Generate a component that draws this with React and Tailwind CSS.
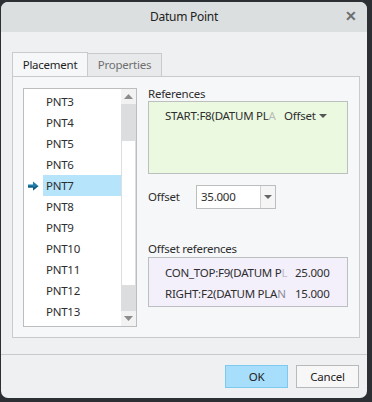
import React from "react";

const points = ["PNT3", "PNT4", "PNT5", "PNT6", "PNT7", "PNT8", "PNT9", "PNT10", "PNT11", "PNT12", "PNT13"];

const ArrowIcon = () => (
  <svg width="11" height="10" viewBox="0 0 11 10">
    <path d="M0 3.5h5V0.5l5.5 4.5L5 9.5V6.5H0z" fill="#1f7fae" />
    <path d="M0 5h5v1.5H0zM5 6.5v3l5.5-4.5H9z" fill="#15587d" />
  </svg>
);

const App = () => {
  return (
    <div
      className="w-[372px] h-[402px] bg-[#2c2f33] pt-[2px] pl-[1px] overflow-hidden text-[#2e2e2e] tracking-[-0.25px]"
      style={{ fontFamily: '"Noto Sans", "Open Sans", sans-serif' }}
    >
      <div className="w-[366px] h-[396px] rounded-[7px] bg-[#eff0f1] overflow-hidden flex flex-col">
        {/* Title bar */}
        <div className="relative h-[30px] bg-[#dcdfe0] flex items-center justify-center shrink-0">
          <span className="text-[12px] text-[#222]">Datum Point</span>
          <span className="absolute right-[10px] top-[7px] text-[14px] font-bold leading-none text-[#6b6e71]">✕</span>
        </div>

        {/* Tabs */}
        <div className="pl-[11px] pt-[20px] flex text-[11.5px]">
          <div className="h-[24px] w-[76px] border border-b-0 border-[#c9cacb] bg-[#f6f7f8] flex items-center justify-center text-[#1e1e1e] relative z-10 -mb-px">
            Placement
          </div>
          <div className="h-[23px] w-[74px] mt-[1px] border border-l-0 border-b-0 border-[#c9cacb] bg-[#e8e9ea] flex items-center justify-center text-[#6d6f71]">
            Properties
          </div>
        </div>

        {/* Tab panel */}
        <div className="ml-[11px] w-[348px] h-[262px] border border-[#c9cacb] bg-[#f6f7f8] flex pl-[10px] pt-[11px] text-[11.5px]">
          {/* List */}
          <div className="w-[114px] h-[239px] border border-[#bcbdbe] bg-white flex">
            <div className="flex-1 pt-[2px]">
              {points.map((p) => (
                <div key={p} className="h-[21px] flex items-center">
                  <div className="w-[19px] flex justify-end pr-[4px]">{p === "PNT7" && <ArrowIcon />}</div>
                  <div
                    className={`flex-1 h-full flex items-center pl-[3px] ${
                      p === "PNT7" ? "bg-[#b5e4fb]" : ""
                    }`}
                  >
                    {p}
                  </div>
                </div>
              ))}
            </div>
            {/* Scrollbar */}
            <div className="w-[15px] flex flex-col bg-[#dcdddf]">
              <div className="h-[15px] bg-[#f2f2f2] flex items-center justify-center">
                <svg width="9" height="5" viewBox="0 0 9 5">
                  <path d="M0 5L4.5 0L9 5z" fill="#8a8c8e" />
                </svg>
              </div>
              <div className="h-[37px]" />
              <div className="h-[144px] bg-white mx-[1px]" />
              <div className="flex-1" />
              <div className="h-[15px] bg-[#f2f2f2] flex items-center justify-center">
                <svg width="9" height="5" viewBox="0 0 9 5">
                  <path d="M0 0L4.5 5L9 0z" fill="#8a8c8e" />
                </svg>
              </div>
            </div>
          </div>

          {/* Right column */}
          <div className="ml-[11px] w-[200px] flex flex-col">
            <div className="h-[14px] leading-[14px] -mt-[1px]">References</div>
            <div className="h-[73px] border border-[#bdbebf] bg-[#ebf9e1] pl-[16px] pt-[5px]">
              <div className="flex items-center h-[17px] whitespace-nowrap">
                <span className="w-[119px]">
                  START:F8(DATUM PL<span className="text-[#b9bdb6]">A</span>
                </span>
                <span>Offset</span>
                <svg className="ml-[3px]" width="8" height="4" viewBox="0 0 8 4">
                  <path d="M0 0L4 4L8 0z" fill="#555" />
                </svg>
              </div>
            </div>

            <div className="flex items-center mt-[11px] h-[24px]">
              <span className="w-[48px]">Offset</span>
              <div className="w-[80px] h-[24px] border border-[#bcbdbe] bg-white flex">
                <span className="flex-1 pl-[4px] leading-[22px]">35.000</span>
                <div className="w-[15px] border-l border-[#d0d1d2] bg-[#f5f5f5] flex items-center justify-center">
                  <svg width="8" height="4" viewBox="0 0 8 4">
                    <path d="M0 0L4 4L8 0z" fill="#666" />
                  </svg>
                </div>
              </div>
            </div>

            <div className="mt-[32px] h-[16px] leading-[16px]">Offset references</div>
            <div className="h-[50px] border border-[#bdbebf] bg-[#f3f0fc] pl-[16px] pt-[4px] whitespace-nowrap">
              <div className="flex items-center h-[21px]">
                <span className="w-[130px]">
                  CON_TOP:F9(DATUM P<span className="text-[#bdbac6]">L</span>
                </span>
                <span>25.000</span>
              </div>
              <div className="flex items-center h-[21px]">
                <span className="w-[130px]">
                  RIGHT:F2(DATUM PLA<span className="text-[#8d8a96]">N</span>
                </span>
                <span>15.000</span>
              </div>
            </div>
          </div>
        </div>

        {/* Footer */}
        <div className="mt-[16px] border-t border-[#c9cacb] flex justify-end pr-[8px] pt-[10px] gap-[8px] text-[11.5px]">
          <button className="w-[63px] h-[23px] border border-[#7dc9f0] bg-[#a6defb] text-[#222]">OK</button>
          <button className="w-[63px] h-[23px] border border-[#b8b9ba] bg-[#f7f7f7] text-[#222]">Cancel</button>
        </div>
      </div>
    </div>
  );
};

export default App;
